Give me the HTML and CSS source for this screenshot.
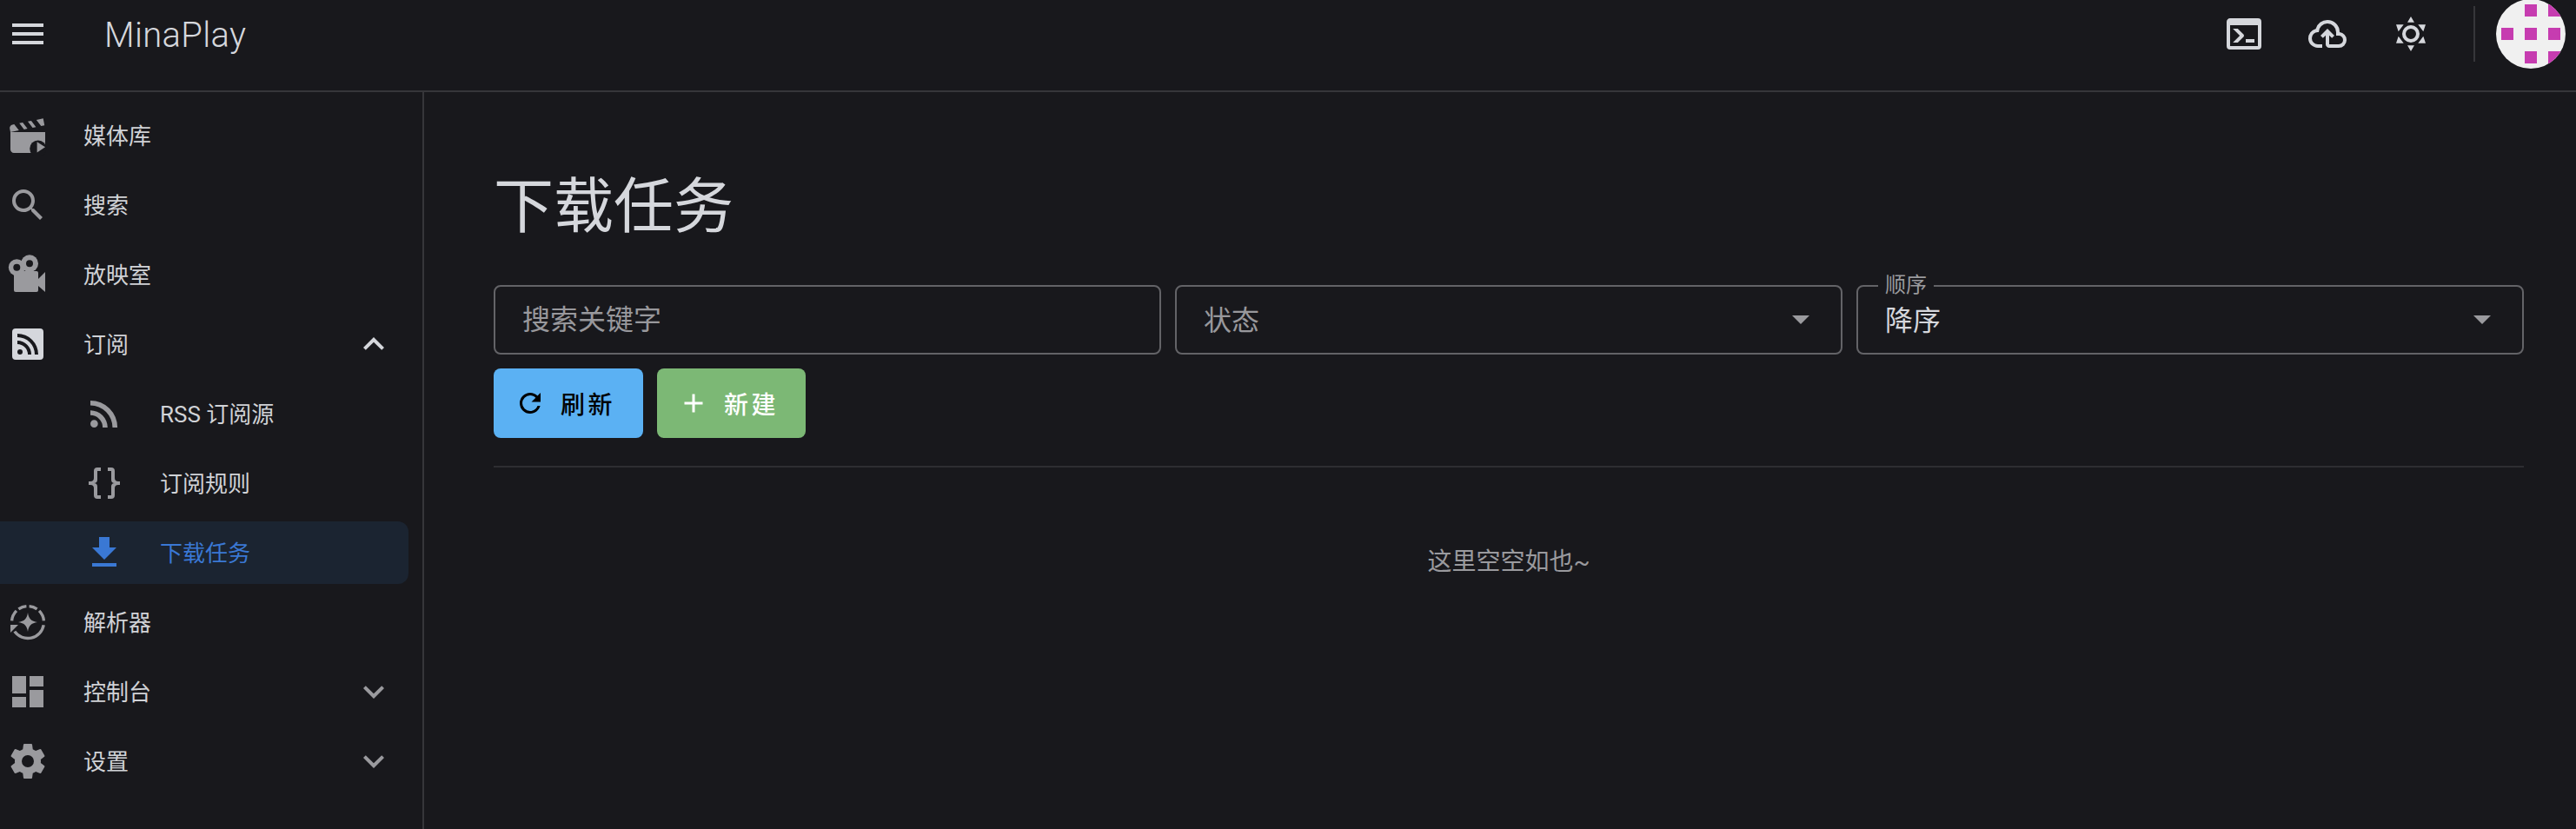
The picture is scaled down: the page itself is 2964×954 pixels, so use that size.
FILE: index.html
```html
<!DOCTYPE html>
<html lang="zh">
<head>
    <meta charset="UTF-8">
    <title>MinaPlay</title>
    <link rel="stylesheet" href="styles.css">
</head>
<body>
<header class="app-bar">
    <svg class="icon bar-icon" viewBox="0 0 24 24"><path d="M3,6H21V8H3V6M3,11H21V13H3V11M3,16H21V18H3V16Z"/></svg>
    <span class="brand">MinaPlay</span>
    <div class="bar-actions">
        <svg class="icon bar-icon" viewBox="0 0 24 24"><path d="M20,19V7H4V19H20M20,3A2,2 0 0,1 22,5V19A2,2 0 0,1 20,21H4A2,2 0 0,1 2,19V5C2,3.89 2.9,3 4,3H20M13,17V15H18V17H13M9.58,13L5.57,9H8.4L11.7,12.3C12.09,12.69 12.09,13.33 11.7,13.72L8.42,17H5.59L9.58,13Z"/></svg>
        <svg class="icon bar-icon" viewBox="0 0 24 24"><path d="M6.5 20Q4.22 20 2.61 18.43 1 16.85 1 14.58 1 12.63 2.17 11.1 3.35 9.57 5.25 9.15 5.88 6.85 7.75 5.43 9.63 4 12 4 14.93 4 16.96 6.04 19 8.07 19 11 20.73 11.2 21.86 12.5 23 13.78 23 15.5 23 17.38 21.69 18.69 20.38 20 18.5 20H13Q12.18 20 11.59 19.41 11 18.83 11 18V12.85L9.4 14.4L8 13L12 9L16 13L14.6 14.4L13 12.85V18H18.5Q19.55 18 20.27 17.27 21 16.55 21 15.5 21 14.45 20.27 13.73 19.55 13 18.5 13H17V11Q17 8.93 15.54 7.46 14.08 6 12 6 9.93 6 8.46 7.46 7 8.93 7 11H6.5Q5.05 11 4.03 12.03 3 13.05 3 14.5 3 15.95 4.03 17 5.05 18 6.5 18H9V20M12 13Z"/></svg>
        <svg class="icon bar-icon" viewBox="0 0 48 48">
            <path d="M24 4L28 10.7H20ZM24 44L28 37.3H20ZM7 13.3H15.7L9.7 21.3ZM41 13.3H32.3L38.3 21.3ZM7 34.7H15.7L9.7 26.7ZM41 34.7H32.3L38.3 26.7Z"/>
            <circle class="ring" cx="24" cy="24" r="8"/>
        </svg>
    </div>
    <div class="bar-divider"></div>
    <svg class="avatar" viewBox="0 0 80 80">
        <rect x="33" y="6" width="14" height="14"/>
        <rect x="60" y="6" width="14" height="14"/>
        <rect x="6" y="33" width="14" height="14"/>
        <rect x="33" y="33" width="14" height="14"/>
        <rect x="60" y="33" width="14" height="14"/>
        <rect x="33" y="60" width="14" height="14"/>
        <rect x="60" y="60" width="14" height="14"/>
    </svg>
</header>

<div class="layout">
    <nav class="sidebar">
        <a class="nav-item">
            <svg class="icon" viewBox="0 0 24 24">
                <path d="M20.84 2.18L16.91 2.96L19.65 6.5L21.62 6.1L20.84 2.18M13.97 3.54L12 3.93L14.75 7.46L16.71 7.07L13.97 3.54M9.07 4.5L7.1 4.91L9.85 8.44L11.81 8.05L9.07 4.5M4.16 5.5L3.18 5.69C2.1 5.91 1.4 6.96 1.61 8.04L2 10L6.9 9.03L4.16 5.5M2 10V20C2 21.11 2.9 22 4 22H20C21.11 22 22 21.11 22 20V10H2Z"/>
                <circle class="cut" cx="17.9" cy="19.5" r="4.8"/>
                <path d="M17.3 15.6L22 18.6L17.3 21.7Z"/>
            </svg>
            <span>媒体库</span>
        </a>
        <a class="nav-item">
            <svg class="icon" viewBox="0 0 24 24"><path d="M9.5,3A6.5,6.5 0 0,1 16,9.5C16,11.11 15.41,12.59 14.44,13.73L14.71,14H15.5L20.5,19L19,20.5L14,15.5V14.71L13.73,14.44C12.59,15.41 11.11,16 9.5,16A6.5,6.5 0 0,1 3,9.5A6.5,6.5 0 0,1 9.5,3M9.5,5C7,5 5,7 5,9.5C5,12 7,14 9.5,14C12,14 14,12 14,9.5C14,7 12,5 9.5,5Z"/></svg>
            <span>搜索</span>
        </a>
        <a class="nav-item">
            <svg class="icon" viewBox="0 0 48 48">
                <circle cx="11.3" cy="15.7" r="9.5"/>
                <circle cx="26" cy="11.3" r="10"/>
                <rect x="8" y="20" width="28" height="24" rx="2"/>
                <path d="M36 29L44 21V44L36 37Z"/>
                <circle class="cut" cx="11.3" cy="15.7" r="4"/>
                <circle class="cut" cx="26" cy="11.3" r="4"/>
            </svg>
            <span>放映室</span>
        </a>
        <a class="nav-item open">
            <svg class="icon" viewBox="0 0 24 24"><path d="M5,3H19A2,2 0 0,1 21,5V19A2,2 0 0,1 19,21H5A2,2 0 0,1 3,19V5A2,2 0 0,1 5,3M7.5,15A1.5,1.5 0 0,0 6,16.5A1.5,1.5 0 0,0 7.5,18A1.5,1.5 0 0,0 9,16.5A1.5,1.5 0 0,0 7.5,15M6,10V12A6,6 0 0,1 12,18H14A8,8 0 0,0 6,10M6,6V8A10,10 0 0,1 16,18H18A12,12 0 0,0 6,6Z"/></svg>
            <span>订阅</span>
            <svg class="icon chevron" viewBox="0 0 24 24"><path d="M7.41,15.41L12,10.83L16.59,15.41L18,14L12,8L6,14L7.41,15.41Z"/></svg>
        </a>
        <a class="nav-item sub">
            <svg class="icon" viewBox="0 0 24 24"><path d="M6.18,15.64A2.18,2.18 0 0,1 8.36,17.82C8.36,19 7.38,20 6.18,20C5,20 4,19 4,17.82A2.18,2.18 0 0,1 6.18,15.64M4,4.44A15.56,15.56 0 0,1 19.56,20H16.73A12.73,12.73 0 0,0 4,7.27V4.44M4,10.1A9.9,9.9 0 0,1 13.9,20H11.07A7.07,7.07 0 0,0 4,12.93V10.1Z"/></svg>
            <span>RSS 订阅源</span>
        </a>
        <a class="nav-item sub">
            <svg class="icon" viewBox="0 0 24 24"><path d="M8,3A2,2 0 0,0 6,5V9A2,2 0 0,1 4,11H3V13H4A2,2 0 0,1 6,15V19A2,2 0 0,0 8,21H10V19H8V14A2,2 0 0,0 6,12A2,2 0 0,0 8,10V5H10V3M16,3A2,2 0 0,1 18,5V9A2,2 0 0,0 20,11H21V13H20A2,2 0 0,0 18,15V19A2,2 0 0,1 16,21H14V19H16V14A2,2 0 0,1 18,12A2,2 0 0,1 16,10V5H14V3H16Z"/></svg>
            <span>订阅规则</span>
        </a>
        <a class="nav-item sub active">
            <svg class="icon" viewBox="0 0 24 24"><path d="M5,20H19V18H5M19,9H15V3H9V9H5L12,16L19,9Z"/></svg>
            <span>下载任务</span>
        </a>
        <a class="nav-item">
            <svg class="icon" viewBox="0 0 48 48">
                <path class="line" d="M25.6 5.6A18.5 18.5 0 0 1 34.6 8.8M37.1 10.9A18.5 18.5 0 0 1 42.4 22.4M22.4 5.6A18.5 18.5 0 0 0 13.4 8.8M10.9 10.9A18.5 18.5 0 0 0 5.6 22.4M42.2 27.2A18.5 18.5 0 0 1 8.8 34.6"/>
                <path d="M4 27H13L4 36Z"/>
                <path d="M24 13C25 20 28 23 35 24C28 25 25 28 24 35C23 28 20 25 13 24C20 23 23 20 24 13Z"/>
            </svg>
            <span>解析器</span>
        </a>
        <a class="nav-item">
            <svg class="icon" viewBox="0 0 24 24"><path d="M13,3V9H21V3M13,21H21V11H13M3,21H11V15H3M3,13H11V3H3V13Z"/></svg>
            <span>控制台</span>
            <svg class="icon chevron" viewBox="0 0 24 24"><path d="M7.41,8.58L12,13.17L16.59,8.58L18,10L12,16L6,10L7.41,8.58Z"/></svg>
        </a>
        <a class="nav-item">
            <svg class="icon" viewBox="0 0 24 24"><path d="M12,15.5A3.5,3.5 0 0,1 8.5,12A3.5,3.5 0 0,1 12,8.5A3.5,3.5 0 0,1 15.5,12A3.5,3.5 0 0,1 12,15.5M19.43,12.97C19.47,12.65 19.5,12.33 19.5,12C19.5,11.67 19.47,11.34 19.43,11L21.54,9.37C21.73,9.22 21.78,8.95 21.66,8.73L19.66,5.27C19.54,5.05 19.27,4.96 19.05,5.05L16.56,6.05C16.04,5.66 15.5,5.32 14.87,5.07L14.5,2.42C14.46,2.18 14.25,2 14,2H10C9.75,2 9.54,2.18 9.5,2.42L9.13,5.07C8.5,5.32 7.96,5.66 7.44,6.05L4.95,5.05C4.73,4.96 4.46,5.05 4.34,5.27L2.34,8.73C2.21,8.95 2.27,9.22 2.46,9.37L4.57,11C4.53,11.34 4.5,11.67 4.5,12C4.5,12.33 4.53,12.65 4.57,12.97L2.46,14.63C2.27,14.78 2.21,15.05 2.34,15.27L4.34,18.73C4.46,18.95 4.73,19.03 4.95,18.95L7.44,17.94C7.96,18.34 8.5,18.68 9.13,18.93L9.5,21.58C9.54,21.82 9.75,22 10,22H14C14.25,22 14.46,21.82 14.5,21.58L14.87,18.93C15.5,18.67 16.04,18.34 16.56,17.94L19.05,18.95C19.27,19.03 19.54,18.95 19.66,18.73L21.66,15.27C21.78,15.05 21.73,14.78 21.54,14.63L19.43,12.97Z"/></svg>
            <span>设置</span>
            <svg class="icon chevron" viewBox="0 0 24 24"><path d="M7.41,8.58L12,13.17L16.59,8.58L18,10L12,16L6,10L7.41,8.58Z"/></svg>
        </a>
    </nav>

    <main class="content">
        <h1>下载任务</h1>
        <div class="filters">
            <input class="field" type="text" placeholder="搜索关键字">
            <div class="field select placeholder">
                <span>状态</span>
                <i class="caret"></i>
            </div>
            <div class="field select">
                <label class="float-label">顺序</label>
                <span>降序</span>
                <i class="caret"></i>
            </div>
        </div>
        <div class="actions">
            <button class="btn btn-blue">
                <svg class="btn-icon" viewBox="0 0 24 24"><path d="M17.65,6.35C16.2,4.9 14.21,4 12,4A8,8 0 0,0 4,12A8,8 0 0,0 12,20C15.73,20 18.84,17.45 19.73,14H17.65C16.83,16.33 14.61,18 12,18A6,6 0 0,1 6,12A6,6 0 0,1 12,6C13.66,6 15.14,6.69 16.22,7.78L13,11H20V4L17.65,6.35Z"/></svg>
                刷新
            </button>
            <button class="btn btn-green">
                <svg class="btn-icon" viewBox="0 0 24 24"><path d="M19,13H13V19H11V13H5V11H11V5H13V11H19V13Z"/></svg>
                新建
            </button>
        </div>
        <hr class="divider">
        <p class="empty">这里空空如也~</p>
    </main>
</div>
</body>
</html>
```

FILE: styles.css
```css
* {
    box-sizing: border-box;
}
html, body {
    height: 100%;
}
body {
    margin: 0;
    display: flex;
    flex-direction: column;
    overflow: hidden;
    background-color: #18181c;
    color: #d5d7dc;
    font-family: Roboto, "Noto Sans CJK SC", sans-serif;
}
.icon {
    width: 48px;
    height: 48px;
    flex: none;
    fill: currentColor;
}
.cut {
    fill: #18181c;
}
.ring {
    fill: none;
    stroke: currentColor;
    stroke-width: 4;
}
.line {
    fill: none;
    stroke: currentColor;
    stroke-width: 3.4;
}

/* top bar */
.app-bar {
    flex: none;
    display: flex;
    align-items: center;
    height: 106px;
    padding: 0 12px 26px 8px;
    border-bottom: 2px solid #36363a;
}
.brand {
    margin-left: 64px;
    padding-top: 3px;
    font-size: 40px;
    font-weight: 300;
    letter-spacing: 0.3px;
    line-height: 48px;
}
.bar-actions {
    display: flex;
    gap: 48px;
    margin-left: auto;
}
.bar-divider {
    width: 2px;
    height: 64px;
    margin: 0 24px 0 48px;
    background-color: #36363a;
}
.avatar {
    width: 80px;
    height: 80px;
    border-radius: 50%;
    background-color: #f0f0f0;
    fill: #c63cb0;
}

/* side menu */
.layout {
    flex: 1;
    display: flex;
    min-height: 0;
}
.sidebar {
    flex: none;
    width: 488px;
    padding: 14px 16px 0 0;
    border-right: 2px solid #36363a;
}
.nav-item {
    display: flex;
    align-items: center;
    gap: 40px;
    height: 72px;
    margin-bottom: 8px;
    padding: 0 16px 0 8px;
    border-radius: 0 12px 12px 0;
    color: #9a9a9e;
    font-size: 26px;
}
.nav-item span {
    padding-bottom: 4px;
    color: #d0d2d6;
}
.nav-item.open > .icon {
    color: #d5d7dc;
}
.nav-item .chevron {
    margin-left: auto;
}
.nav-item.sub {
    padding-left: 96px;
}
.nav-item.active {
    background-color: #1b2431;
    color: #3a78d4;
}
.nav-item.active span {
    color: #3a78d4;
}

/* page */
.content {
    flex: 1;
    min-width: 0;
    padding: 92px 60px 0 80px;
}
h1 {
    margin: 0 0 48px;
    font-size: 69px;
    font-weight: 400;
    line-height: 82px;
}
.filters {
    display: grid;
    grid-template-columns: repeat(3, 1fr);
    gap: 16px;
}
.field {
    position: relative;
    display: flex;
    align-items: center;
    justify-content: space-between;
    height: 80px;
    padding: 0 31px;
    border: 2px solid #636367;
    border-radius: 8px;
    background: transparent;
    color: #d5d7dc;
    font-family: inherit;
    font-size: 32px;
    outline: none;
}
.field::placeholder,
.select.placeholder {
    color: #98989c;
    opacity: 1;
}
.select {
    padding-right: 36px;
}
.select span {
    padding-bottom: 4px;
}
.caret {
    width: 0;
    height: 0;
    border-left: 10px solid transparent;
    border-right: 10px solid transparent;
    border-top: 10px solid #9a9a9e;
}
.float-label {
    position: absolute;
    top: -16px;
    left: 23px;
    padding: 0 8px;
    background-color: #18181c;
    color: #9a9a9e;
    font-size: 24px;
    line-height: 28px;
}
.actions {
    display: flex;
    gap: 16px;
    margin-top: 16px;
}
.btn {
    display: flex;
    align-items: center;
    gap: 17px;
    height: 80px;
    padding: 0 32px 0 24px;
    border: none;
    border-radius: 8px;
    font-family: inherit;
    font-size: 28px;
    font-weight: 500;
    letter-spacing: 3.5px;
}
.btn-icon {
    width: 36px;
    height: 36px;
    fill: currentColor;
}
.btn-blue {
    background-color: #5bb1f3;
    color: #000;
}
.btn-green {
    padding-right: 31px;
    background-color: #7cb875;
    color: #fff;
}
.divider {
    height: 2px;
    margin: 32px 0 0;
    border: none;
    background-color: #2e2e32;
}
.empty {
    margin: 89px 0 0;
    color: #9a9a9e;
    font-size: 28px;
    line-height: 40px;
    text-align: center;
}
```
